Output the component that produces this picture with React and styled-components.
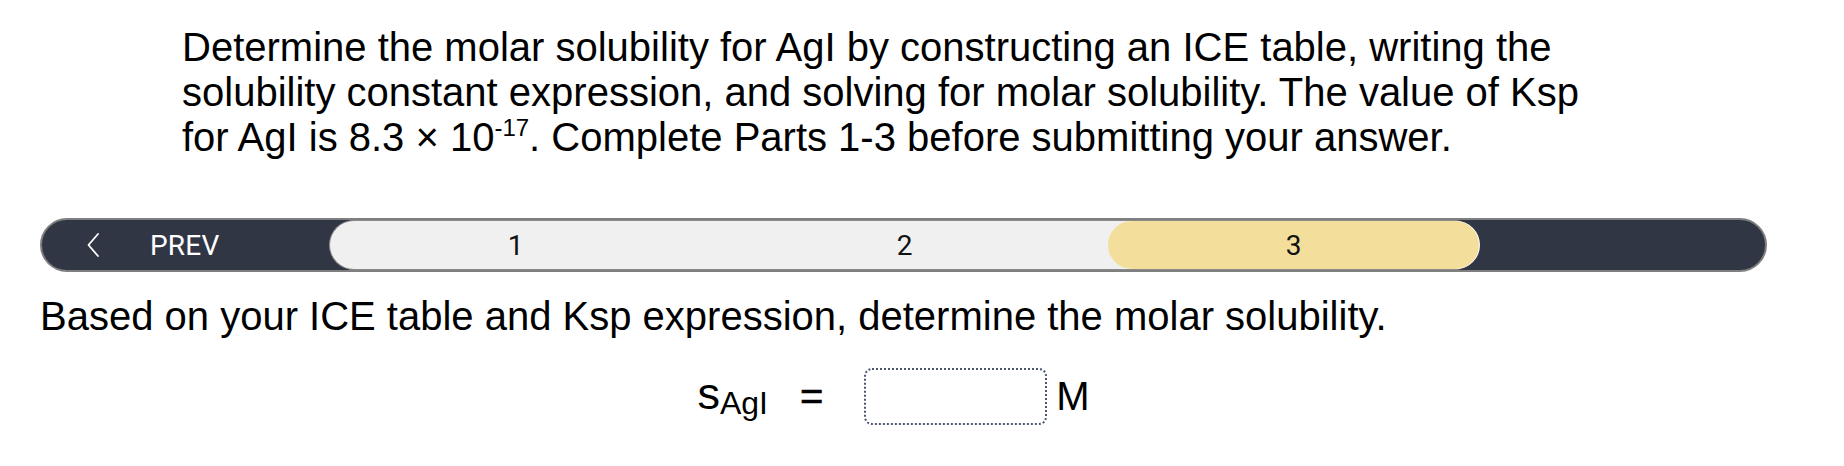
import React from 'react';
import styled, { createGlobalStyle } from 'styled-components';

const GlobalStyle = createGlobalStyle`
  html, body {
    margin: 0;
    padding: 0;
    background: #ffffff;
  }

  body {
    font-family: "Liberation Sans", Arial, sans-serif;
    color: #000000;
  }
`;

const Page = styled.div`
  width: 1727px;
  margin-left: 40px;
  padding-top: 25px;
  padding-bottom: 20px;
`;

const Question = styled.p`
  margin: 0 0 0 142px;
  width: 1410px;
  font-size: 40px;
  line-height: 45px;

  sup {
    font-size: 24px;
    line-height: 0;
    vertical-align: 15px;
  }
`;

const Stepper = styled.div`
  display: flex;
  margin-top: 58px;
  height: 50px;
  border: 2px solid #7f7f7f;
  border-radius: 27px;
  background: #313645;
  overflow: hidden;
`;

const NavButton = styled.div`
  flex: none;
  width: 287px;
  display: flex;
  align-items: center;
  gap: 51px;
  padding-left: 45px;
  box-sizing: border-box;
  color: #ffffff;
  font-family: Roboto, "Liberation Sans", sans-serif;
  font-size: 28px;
  letter-spacing: 0.2px;
`;

const Track = styled.div`
  flex: 1;
  display: flex;
  background: #f0f0f0;
  border: 1px solid #8a8a8a;
  border-right: none;
  border-radius: 25px;
`;

const Step = styled.div`
  flex: none;
  width: ${(p) => p.$width}px;
  margin-left: ${(p) => p.$offset || 0}px;
  padding-right: ${(p) => p.$trim || 0}px;
  box-sizing: border-box;
  display: flex;
  align-items: center;
  justify-content: center;
  font-family: Roboto, "Liberation Sans", sans-serif;
  font-size: 28px;
  color: #111111;
  border-radius: 24px;
  background: ${(p) => (p.$active ? '#f3de9b' : 'transparent')};
  box-shadow: ${(p) => (p.$active ? '1px 0 0 0 #ffffff' : 'none')};
`;

const Prompt = styled.p`
  margin: 22px 0 0 0;
  font-size: 40px;
  line-height: 45px;
`;

const AnswerRow = styled.div`
  display: flex;
  align-items: flex-start;
  justify-content: center;
  margin-top: 29px;
  padding-right: 20px;
  font-size: 40px;
  line-height: 1;
`;

const Variable = styled.span`
  display: flex;
  align-items: flex-start;
  margin-top: 3px;
`;

const Symbol = styled.span`
  font-size: 45px;
  line-height: 1;
`;

const Subscript = styled.span`
  margin-top: 16px;
  font-size: 32px;
  line-height: 1;
`;

const Equals = styled.span`
  margin: 8px 0 0 32px;
  -webkit-text-stroke: 0.6px #000;
`;

const AnswerBox = styled.div`
  width: 183px;
  height: 57px;
  margin-left: 41px;
  box-sizing: border-box;
  border: 2px dotted #4a5672;
  border-radius: 8px;
`;

const Unit = styled.span`
  margin: 8px 0 0 9px;
`;

function Chevron() {
  return (
    <svg width="12" height="24" viewBox="0 0 12 24" fill="none">
      <polyline
        points="11,1 1.5,12 11,23"
        stroke="#ffffff"
        strokeWidth="1.8"
        strokeLinecap="round"
        strokeLinejoin="round"
      />
    </svg>
  );
}

const steps = [
  { n: 1, width: 380, trim: 9 },
  { n: 2, width: 389 },
  { n: 3, width: 371, offset: 9 },
];

export default function App() {
  const current = 3;

  return (
    <>
      <GlobalStyle />
      <Page>
        <Question>
          Determine the molar solubility for AgI by constructing an ICE table, writing the
          solubility constant expression, and solving for molar solubility. The value of Ksp
          for AgI is 8.3 × 10<sup>-17</sup>. Complete Parts 1-3 before submitting your answer.
        </Question>

        <Stepper>
          <NavButton>
            <Chevron />
            <span>PREV</span>
          </NavButton>
          <Track>
            {steps.map((s) => (
              <Step
                key={s.n}
                $width={s.width}
                $trim={s.trim}
                $offset={s.offset}
                $active={s.n === current}
              >
                {s.n}
              </Step>
            ))}
          </Track>
          <NavButton />
        </Stepper>

        <Prompt>Based on your ICE table and Ksp expression, determine the molar solubility.</Prompt>

        <AnswerRow>
          <Variable>
            <Symbol>s</Symbol>
            <Subscript>AgI</Subscript>
          </Variable>
          <Equals>=</Equals>
          <AnswerBox />
          <Unit>M</Unit>
        </AnswerRow>
      </Page>
    </>
  );
}
